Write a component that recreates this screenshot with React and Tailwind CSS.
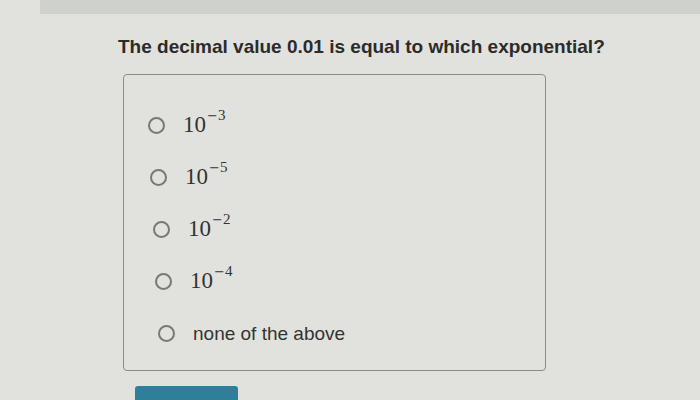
const options = [
  { id: 'a', exp: '3', pad: 'pl-[24px]' },
  { id: 'b', exp: '5', pad: 'pl-[26px]' },
  { id: 'c', exp: '2', pad: 'pl-[29px]' },
  { id: 'd', exp: '4', pad: 'pl-[31px]' },
  { id: 'e', text: 'none of the above', pad: 'pl-[34px]' },
]

function Radio() {
  return <span className="block w-[17px] h-[17px] shrink-0 rounded-full border-2 border-[#777976]" />
}

function Option({ opt }) {
  return (
    <label className={`flex items-center h-[24px] gap-[18px] ${opt.pad}`}>
      <Radio />
      {opt.text ? (
        <span className="text-[19px] leading-none text-[#333] font-['Liberation_Sans',Arial,sans-serif]">
          {opt.text}
        </span>
      ) : (
        <span className="text-[23px] leading-none text-[#333] font-['Liberation_Serif','Times_New_Roman',serif] -mt-[2px]">
          10
          <span className="relative -top-[12px] ml-[1px] text-[15px] leading-none">
            <span className="font-['DejaVu_Sans',sans-serif] text-[13px]">−</span>
            {opt.exp}
          </span>
        </span>
      )}
    </label>
  )
}

export default function App() {
  return (
    <div className="w-[700px] h-[400px] overflow-hidden bg-[#e1e2dd] font-['Liberation_Sans',Arial,sans-serif]">
      <div className="h-[14px] ml-[40px] bg-[#cfd1cb]" />
      <h1 className="mt-[23px] ml-[118px] text-[19px] leading-none font-bold text-[#2b2b2b]">
        The decimal value 0.01 is equal to which exponential?
      </h1>
      <div className="mt-[18px] ml-[123px] w-[423px] h-[297px] rounded-[4px] border border-[#8a8c88] pt-[38px] flex flex-col gap-[28px]">
        {options.map((opt) => (
          <Option key={opt.id} opt={opt} />
        ))}
      </div>
      <div className="mt-[15px] ml-[135px] w-[103px] h-[14px] rounded-t-[3px] bg-[#2f7f9b]" />
    </div>
  )
}
